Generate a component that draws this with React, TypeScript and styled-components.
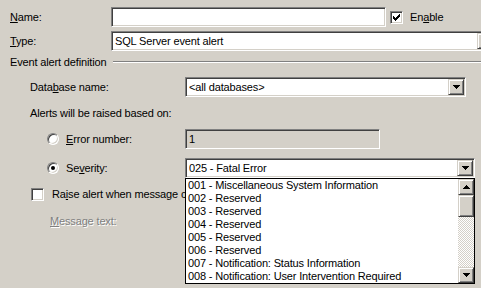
import React from "react";
import styled, { createGlobalStyle } from "styled-components";

const Global = createGlobalStyle`
  html, body { margin: 0; padding: 0; background: #d4d0c8; overflow: hidden; }
  body { font-family: "Liberation Sans", Arial, sans-serif; font-size: 11px; color: #000; letter-spacing: -0.15px; }
  * { box-sizing: border-box; }
`;

const Page = styled.div`
  width: 481px;
  height: 288px;
  display: flex;
  flex-direction: column;
  position: relative;
  overflow: hidden;
`;

const Row = styled.div<{ $mt: number; $h: number; $pl: number }>`
  display: flex;
  align-items: center;
  margin-top: ${(p) => p.$mt}px;
  height: ${(p) => p.$h}px;
  padding-left: ${(p) => p.$pl}px;
  flex-shrink: 0;
  white-space: nowrap;
`;

const Label = styled.span<{ $w?: number; $disabled?: boolean; $clip?: number }>`
  display: inline-block;
  width: ${(p) => (p.$w ? `${p.$w}px` : "auto")};
  max-width: ${(p) => (p.$clip ? `${p.$clip}px` : "none")};
  overflow: ${(p) => (p.$clip ? "hidden" : "visible")};
  flex-shrink: 0;
  color: ${(p) => (p.$disabled ? "#808080" : "#000")};
  text-shadow: ${(p) => (p.$disabled ? "1px 1px 0 #fff" : "none")};
`;

const U = styled.span`
  text-decoration: underline;
  text-underline-offset: 1px;
`;

const Sunken = styled.div<{ $w: number; $bg?: string }>`
  width: ${(p) => p.$w}px;
  min-width: ${(p) => p.$w}px;
  height: 20px;
  flex-shrink: 0;
  display: flex;
  align-items: center;
  background: ${(p) => p.$bg ?? "#fff"};
  border: 1px solid;
  border-color: #808080 #fff #fff #808080;
  box-shadow: inset 1px 1px 0 #404040, inset -1px -1px 0 #d4d0c8;
  padding: 1px 1px 1px 3px;
  position: relative;
`;

const FieldText = styled.span`
  flex: 1;
  overflow: hidden;
  line-height: 14px;
`;

const Raised = styled.div<{ $h?: number }>`
  width: 16px;
  height: ${(p) => p.$h ?? 16}px;
  flex-shrink: 0;
  background: #d4d0c8;
  border: 1px solid;
  border-color: #d4d0c8 #404040 #404040 #d4d0c8;
  box-shadow: inset 1px 1px 0 #fff, inset -1px -1px 0 #808080;
  display: flex;
  align-items: center;
  justify-content: center;
`;

const CheckBox = styled.div`
  width: 13px;
  height: 13px;
  flex-shrink: 0;
  background: #fff;
  border: 1px solid;
  border-color: #808080 #fff #fff #808080;
  box-shadow: inset 1px 1px 0 #404040, inset -1px -1px 0 #d4d0c8;
  display: flex;
  align-items: center;
  justify-content: center;
`;

const Radio = styled.div`
  width: 12px;
  height: 12px;
  flex-shrink: 0;
  border-radius: 50%;
  background: #fff;
  border: 1px solid;
  border-color: #808080 #fff #fff #808080;
  box-shadow: inset 1px 1px 0 #404040, inset -1px -1px 0 #d4d0c8;
  display: flex;
  align-items: center;
  justify-content: center;
`;

const Dot = styled.div`
  width: 4px;
  height: 4px;
  border-radius: 50%;
  background: #000;
`;

const Gap = styled.span<{ $w: number }>`
  display: inline-block;
  width: ${(p) => p.$w}px;
  flex-shrink: 0;
`;

const Etched = styled.div`
  flex: 1;
  height: 2px;
  border-top: 1px solid #808080;
  border-bottom: 1px solid #fff;
  margin-left: 7px;
`;

const ComboWrap = styled.div`
  position: relative;
  flex-shrink: 0;
`;

const ListBox = styled.div`
  position: absolute;
  left: 0;
  top: 20px;
  width: 290px;
  height: 106px;
  background: #fff;
  border: 1px solid #000;
  display: flex;
  z-index: 5;
`;

const Items = styled.div`
  flex: 1;
  display: flex;
  flex-direction: column;
  overflow: hidden;
`;

const Item = styled.div`
  height: 13px;
  line-height: 13px;
  padding-left: 2px;
  white-space: nowrap;
`;

const ScrollBar = styled.div`
  width: 16px;
  display: flex;
  flex-direction: column;
  background-color: #fff;
  background-image: repeating-conic-gradient(#d4d0c8 0 25%, #fff 0 50%);
  background-size: 2px 2px;
`;

const Track = styled.div`
  flex: 1;
`;

const DownArrow = () => (
  <svg width="7" height="4" viewBox="0 0 7 4">
    <path d="M0 0h7v1H0zM1 1h5v1H1zM2 2h3v1H2zM3 3h1v1H3z" fill="#000" />
  </svg>
);

const UpArrow = () => (
  <svg width="7" height="4" viewBox="0 0 7 4">
    <path d="M3 0h1v1H3zM2 1h3v1H2zM1 2h5v1H1zM0 3h7v1H0z" fill="#000" />
  </svg>
);

const Check = () => (
  <svg width="7" height="7" viewBox="0 0 7 7">
    <path
      d="M6 0h1v1H6zM5 1h2v1H5zM0 2h1v1H0zM4 2h3v1H4zM0 3h2v1H0zM3 3h3v1H3zM0 4h5v1H0zM1 5h3v1H1zM2 6h1v1H2z"
      fill="#000"
    />
  </svg>
);

const items = [
  "001 - Miscellaneous System Information",
  "002 - Reserved",
  "003 - Reserved",
  "004 - Reserved",
  "005 - Reserved",
  "006 - Reserved",
  "007 - Notification: Status Information",
  "008 - Notification: User Intervention Required",
];

export default function App() {
  return (
    <Page>
      <Global />
      <Row $mt={7} $h={20} $pl={10}>
        <Label $w={101}>
          <U>N</U>ame:
        </Label>
        <Sunken $w={275} />
        <Gap $w={4} />
        <CheckBox>
          <Check />
        </CheckBox>
        <Gap $w={7} />
        <Label>
          En<U>a</U>ble
        </Label>
      </Row>
      <Row $mt={4} $h={20} $pl={10}>
        <Label $w={101}>
          <U>T</U>ype:
        </Label>
        <Sunken $w={384}>
          <FieldText>SQL Server event alert</FieldText>
          <Raised>
            <DownArrow />
          </Raised>
        </Sunken>
      </Row>
      <Row $mt={4} $h={14} $pl={10}>
        <Label>Event alert definition</Label>
        <Etched />
      </Row>
      <Row $mt={8} $h={20} $pl={30}>
        <Label $w={155}>
          Data<U>b</U>ase name:
        </Label>
        <Sunken $w={281}>
          <FieldText>&lt;all databases&gt;</FieldText>
          <Raised>
            <DownArrow />
          </Raised>
        </Sunken>
      </Row>
      <Row $mt={9} $h={14} $pl={30}>
        <Label>Alerts will be raised based on:</Label>
      </Row>
      <Row $mt={9} $h={20} $pl={47}>
        <Radio />
        <Gap $w={7} />
        <Label $w={119}>
          <U>E</U>rror number:
        </Label>
        <Sunken $w={195} $bg="#d4d0c8">
          <FieldText>1</FieldText>
        </Sunken>
      </Row>
      <Row $mt={9} $h={20} $pl={47}>
        <Radio>
          <Dot />
        </Radio>
        <Gap $w={7} />
        <Label $w={119}>
          Se<U>v</U>erity:
        </Label>
        <ComboWrap>
          <Sunken $w={290}>
            <FieldText>025 - Fatal Error</FieldText>
            <Raised>
              <DownArrow />
            </Raised>
          </Sunken>
          <ListBox>
            <Items>
              {items.map((t) => (
                <Item key={t}>{t}</Item>
              ))}
            </Items>
            <ScrollBar>
              <Raised>
                <UpArrow />
              </Raised>
              <Raised $h={22} />
              <Track />
              <Raised>
                <DownArrow />
              </Raised>
            </ScrollBar>
          </ListBox>
        </ComboWrap>
      </Row>
      <Row $mt={9} $h={14} $pl={31}>
        <CheckBox />
        <Gap $w={8} />
        <Label $clip={133}>
          Ra<U>i</U>se alert when message contains:
        </Label>
      </Row>
      <Row $mt={13} $h={14} $pl={50}>
        <Label $disabled>
          <U>M</U>essage text:
        </Label>
      </Row>
    </Page>
  );
}
